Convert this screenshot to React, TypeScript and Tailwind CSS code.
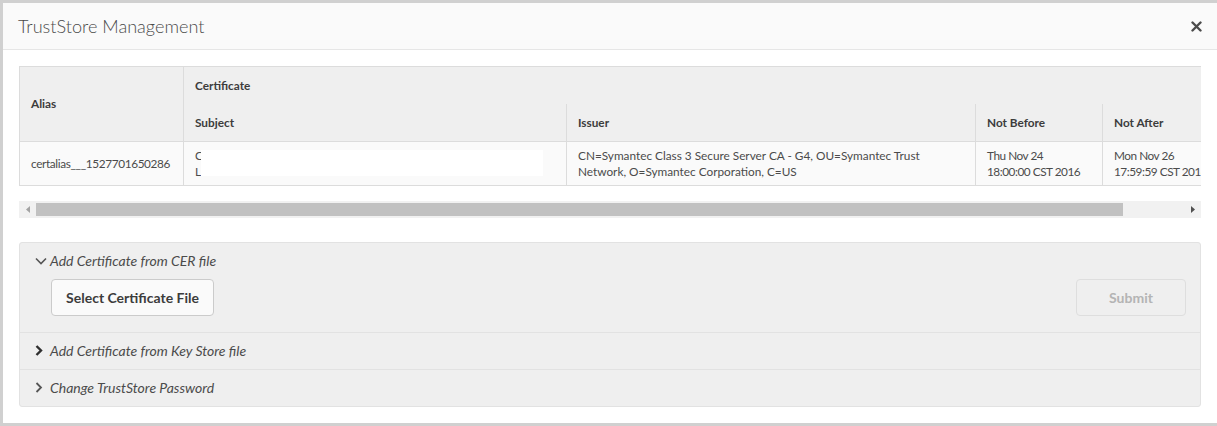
import React from 'react';

const th = 'text-left align-middle font-bold px-[11px] bg-[#efefef] text-[#3c3c3c]';
const td = 'text-left align-middle px-[11px] bg-[#fafafa] border-l border-[#dcdcdc] leading-[16px]';

function CloseIcon() {
  return (
    <svg width="11" height="11" viewBox="0 0 11 11" className="text-[#4b4b4b]">
      <path d="M1.5 1.5 L9.5 9.5 M9.5 1.5 L1.5 9.5" stroke="currentColor" strokeWidth="2.4" strokeLinecap="round" />
    </svg>
  );
}

function Chevron({ open, strong }: { open?: boolean; strong?: boolean }) {
  return (
    <span className="w-[12px] flex items-center justify-start">
      {open ? (
        <svg width="12" height="8" viewBox="0 0 12 8">
          <path d="M1 1.5 L6 6.5 L11 1.5" fill="none" stroke="#555" strokeWidth="1.6" />
        </svg>
      ) : (
        <svg width="8" height="11" viewBox="0 0 8 11">
          <path
            d="M1.5 1 L6 5.5 L1.5 10"
            fill="none"
            stroke={strong ? '#2f2f2f' : '#555'}
            strokeWidth={strong ? 2.4 : 1.8}
          />
        </svg>
      )}
    </span>
  );
}

function Section({ title, open, strong, children }: { title: string; open?: boolean; strong?: boolean; children?: React.ReactNode }) {
  return (
    <div className="border-b border-[#e2e2e2] last:border-b-0">
      <div className="h-[36px] flex items-center pl-[15px] gap-[3px] pb-[1px]">
        <Chevron open={open} strong={strong} />
        <span className="italic text-[14px] text-[#4b4b4b]">{title}</span>
      </div>
      {children}
    </div>
  );
}

export default function App() {
  return (
    <div className="w-[1217px] h-[426px] bg-white border-t-[3px] border-l-[3px] border-b-[3px] border-[#d0d0d0] flex flex-col overflow-hidden font-['Lato',sans-serif] text-[#4b4b4b]">
      {/* Header */}
      <div className="h-[47px] shrink-0 bg-[#fafafa] border-b border-[#e6e6e6] flex items-center justify-between pl-[15px] pr-[15px]">
        <h2 className="text-[18.1px] font-light pt-[1px] text-[#4b4b4b]">TrustStore Management</h2>
        <CloseIcon />
      </div>

      {/* Body */}
      <div className="px-[16px] pt-[16px] pb-[16px] flex flex-col">
        <div className="w-[1182px] overflow-hidden border-t border-l border-b border-[#dcdcdc]">
          <table className="table-fixed border-separate border-spacing-0 w-[1262px] text-[11.8px]">
            <colgroup>
              <col className="w-[163px]" />
              <col className="w-[383px]" />
              <col className="w-[409px]" />
              <col className="w-[127px]" />
              <col className="w-[180px]" />
            </colgroup>
            <thead>
              <tr className="h-[37px]">
                <th rowSpan={2} className={`${th} border-b border-[#dcdcdc]`}>Alias</th>
                <th colSpan={4} className={`${th} border-l border-[#dcdcdc]`}>Certificate</th>
              </tr>
              <tr className="h-[38px]">
                <th className={`${th} border-l border-b border-[#dcdcdc]`}>Subject</th>
                <th className={`${th} border-l border-b border-[#dcdcdc]`}>Issuer</th>
                <th className={`${th} border-l border-b border-[#dcdcdc]`}>Not Before</th>
                <th className={`${th} border-l border-b border-[#dcdcdc]`}>Not After</th>
              </tr>
            </thead>
            <tbody>
              <tr className="h-[43px]">
                <td className="text-left align-middle px-[11px] bg-[#fafafa] leading-[16px] tracking-[-0.03em]">
                  certalias___1527701650286
                </td>
                <td className={td}>
                  <div className="relative">
                    <div>C</div>
                    <div>L</div>
                    <div className="absolute left-[6px] top-[2px] w-[342px] h-[26px] bg-white" />
                  </div>
                </td>
                <td className={td}>
                  <div className="whitespace-nowrap">CN=Symantec Class 3 Secure Server CA - G4, OU=Symantec Trust</div>
                  <div className="whitespace-nowrap">Network, O=Symantec Corporation, C=US</div>
                </td>
                <td className={`${td} tracking-[-0.04em]`}>
                  <div className="whitespace-nowrap">Thu Nov 24</div>
                  <div className="whitespace-nowrap">18:00:00 CST 2016</div>
                </td>
                <td className={`${td} tracking-[-0.04em]`}>
                  <div className="whitespace-nowrap">Mon Nov 26</div>
                  <div className="whitespace-nowrap">17:59:59 CST 2018</div>
                </td>
              </tr>
            </tbody>
          </table>
        </div>

        {/* Horizontal scrollbar */}
        <div className="mt-[15px] h-[17px] w-[1182px] bg-[#f1f1f1] flex items-center">
          <div className="w-[17px] h-full flex items-center justify-center">
            <svg width="4" height="7" viewBox="0 0 4 7"><path d="M4 0 L0 3.5 L4 7 Z" fill="#a3a3a3" /></svg>
          </div>
          <div className="flex-1 h-full py-[2px] flex">
            <div className="w-[1087px] h-full bg-[#c1c1c1]" />
          </div>
          <div className="w-[17px] h-full flex items-center justify-center">
            <svg width="4" height="7" viewBox="0 0 4 7"><path d="M0 0 L4 3.5 L0 7 Z" fill="#505050" /></svg>
          </div>
        </div>

        {/* Accordion */}
        <div className="mt-[24px] w-[1182px] bg-[#efefef] border border-[#e2e2e2] rounded-[3px]">
          <Section title="Add Certificate from CER file" open>
            <div className="flex items-center justify-between pl-[31px] pr-[14px] pb-[16px]">
              <button className="h-[37px] w-[163px] bg-[#fafafa] border border-[#cbcbcb] rounded-[4px] text-[14px] font-bold text-[#3c3c3c]">
                Select Certificate File
              </button>
              <button disabled className="h-[37px] w-[110px] bg-[#efefef] border border-[#dedede] rounded-[4px] text-[14px] font-bold text-[#b4b4b4]">
                Submit
              </button>
            </div>
          </Section>
          <Section title="Add Certificate from Key Store file" strong />
          <Section title="Change TrustStore Password" />
        </div>
      </div>
    </div>
  );
}
